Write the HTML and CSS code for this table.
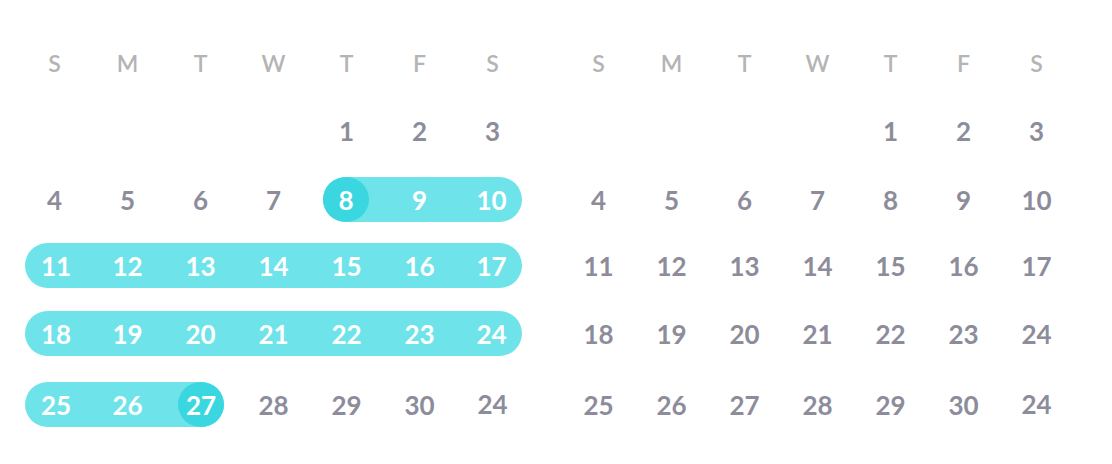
FILE: index.html
```html
<!DOCTYPE html>
<html>
<head>
    <title>Range Picker</title>
    <link rel="stylesheet" href="styles.css">
</head>
<body>
    <div class="months">
        <div class="month">
            <div class="week head">
                <span>S</span><span>M</span><span>T</span><span>W</span><span>T</span><span>F</span><span>S</span>
            </div>
            <div class="week">
                <span></span><span></span><span></span><span></span><span class="day">1</span><span class="day">2</span><span class="day">3</span>
            </div>
            <div class="week">
                <span class="day">4</span><span class="day">5</span><span class="day">6</span><span class="day">7</span>
                <span class="day in start"><b>8</b></span><span class="day in">9</span><span class="day in last">10</span>
            </div>
            <div class="week">
                <span class="day in first">11</span><span class="day in">12</span><span class="day in">13</span><span class="day in">14</span><span class="day in">15</span><span class="day in">16</span><span class="day in last">17</span>
            </div>
            <div class="week">
                <span class="day in first">18</span><span class="day in">19</span><span class="day in">20</span><span class="day in">21</span><span class="day in">22</span><span class="day in">23</span><span class="day in last">24</span>
            </div>
            <div class="week">
                <span class="day in first">25</span><span class="day in">26</span><span class="day in end"><b>27</b></span>
                <span class="day">28</span><span class="day">29</span><span class="day">30</span><span class="day odd">24</span>
            </div>
        </div>

        <div class="month">
            <div class="week head">
                <span>S</span><span>M</span><span>T</span><span>W</span><span>T</span><span>F</span><span>S</span>
            </div>
            <div class="week">
                <span></span><span></span><span></span><span></span><span class="day">1</span><span class="day">2</span><span class="day">3</span>
            </div>
            <div class="week">
                <span class="day">4</span><span class="day">5</span><span class="day">6</span><span class="day">7</span><span class="day">8</span><span class="day">9</span><span class="day">10</span>
            </div>
            <div class="week">
                <span class="day">11</span><span class="day">12</span><span class="day">13</span><span class="day">14</span><span class="day">15</span><span class="day">16</span><span class="day">17</span>
            </div>
            <div class="week">
                <span class="day">18</span><span class="day">19</span><span class="day">20</span><span class="day">21</span><span class="day">22</span><span class="day">23</span><span class="day">24</span>
            </div>
            <div class="week">
                <span class="day">25</span><span class="day">26</span><span class="day">27</span><span class="day">28</span><span class="day">29</span><span class="day">30</span><span class="day odd">24</span>
            </div>
        </div>
    </div>
</body>
</html>
```

FILE: styles.css
```css
body {
    margin: 0;
    background: #fff;
    font-family: Lato, "Open Sans", sans-serif;
}

.months {
    display: flex;
    gap: 33px;
    padding: 40px 0 0 18px;
}

.month {
    display: flex;
    flex-direction: column;
}

.week {
    display: grid;
    grid-template-columns: repeat(7, 73px);
    height: 45px;
}

/* rows aren't evenly spaced in the mockup */
.week:nth-child(2) { margin-top: 23px; }
.week:nth-child(3) { margin-top: 24px; }
.week:nth-child(4) { margin-top: 21px; }
.week:nth-child(5) { margin-top: 23px; }
.week:nth-child(6) { margin-top: 26px; }

.week span {
    display: flex;
    align-items: center;
    justify-content: center;
}

.head {
    font-size: 23px;
    font-weight: 600;
    color: #b4b4b4;
}

.day {
    font-size: 26px;
    font-weight: 700;
    color: #8c8c9a;
}

.day.odd {
    margin-top: -2px;
}

.day.in {
    background: #6fe3ea;
    color: #fff;
}

.day.first {
    margin-left: 7px;
    padding-right: 4px;
    border-radius: 23px 0 0 23px;
}

.day.last {
    margin-right: 7px;
    padding-left: 5px;
    border-radius: 0 23px 23px 0;
}

.day.start {
    margin-left: 13px;
    border-radius: 23px 0 0 23px;
    justify-content: flex-start;
}

.day.end {
    margin-right: 13px;
    border-radius: 0 23px 23px 0;
    justify-content: flex-end;
}

.day b {
    width: 46px;
    height: 45px;
    border-radius: 50%;
    background: #3bd7e0;
    display: flex;
    align-items: center;
    justify-content: center;
    font-weight: 700;
}
```
